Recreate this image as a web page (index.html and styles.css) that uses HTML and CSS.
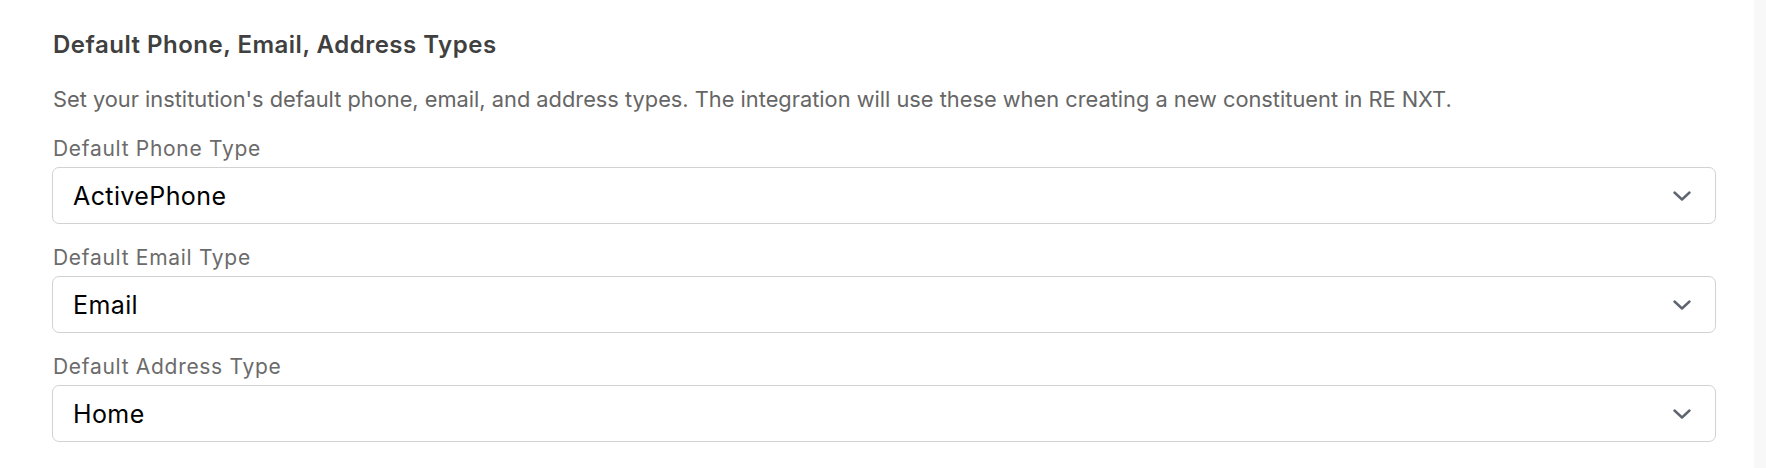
FILE: index.html
```html
<!DOCTYPE html>
<html lang="en">
<head>
<meta charset="utf-8">
<title>Default Phone, Email, Address Types</title>
<link rel="stylesheet" href="styles.css">
</head>
<body>
<div class="page">
  <section class="panel">
    <h2 class="title">Default Phone, Email, Address Types</h2>
    <p class="desc">Set your institution's default phone, email, and address types. The integration will use these when creating a new constituent in RE NXT.</p>
    <div class="field">
      <label class="label">Default Phone Type</label>
      <div class="select">
        <span class="value">ActivePhone</span>
        <svg class="chev" viewBox="0 0 18 10" width="18" height="10"><path d="M1.5 1.5 L9 8.5 L16.5 1.5" fill="none" stroke="#5f6570" stroke-width="2.4" stroke-linecap="round" stroke-linejoin="round"/></svg>
      </div>
    </div>
    <div class="field">
      <label class="label">Default Email Type</label>
      <div class="select">
        <span class="value">Email</span>
        <svg class="chev" viewBox="0 0 18 10" width="18" height="10"><path d="M1.5 1.5 L9 8.5 L16.5 1.5" fill="none" stroke="#5f6570" stroke-width="2.4" stroke-linecap="round" stroke-linejoin="round"/></svg>
      </div>
    </div>
    <div class="field">
      <label class="label">Default Address Type</label>
      <div class="select">
        <span class="value">Home</span>
        <svg class="chev" viewBox="0 0 18 10" width="18" height="10"><path d="M1.5 1.5 L9 8.5 L16.5 1.5" fill="none" stroke="#5f6570" stroke-width="2.4" stroke-linecap="round" stroke-linejoin="round"/></svg>
      </div>
    </div>
  </section>
</div>
</body>
</html>
```
FILE: styles.css
```css
html, body {
  margin: 0;
  padding: 0;
  height: 100%;
}
body {
  background: #f8f8f8;
  font-family: Inter, "Noto Sans", "Liberation Sans", sans-serif;
}
.page {
  display: flex;
  height: 100%;
}
.panel {
  width: 1754px;
  box-sizing: border-box;
  background: #ffffff;
  padding: 31px 38px 0 52px;
}
.title {
  margin: 0;
  font-size: 24px;
  line-height: 28px;
  font-weight: 600;
  letter-spacing: 0.5px;
  color: #404040;
  padding-left: 1px;
}
.desc {
  margin: 26px 0 24px;
  font-size: 21.8px;
  line-height: 28px;
  color: #666666;
  padding-left: 1px;
}
.field {
  display: flex;
  flex-direction: column;
  gap: 6px;
  margin-bottom: 22px;
}
.label {
  font-size: 21px;
  line-height: 24px;
  letter-spacing: 0.7px;
  color: #6b6b6b;
  padding-left: 1px;
}
.select {
  height: 57px;
  box-sizing: border-box;
  border: 1px solid #d2d2d2;
  border-radius: 7px;
  display: flex;
  align-items: center;
  justify-content: space-between;
  padding: 0 24px 0 20px;
}
.value {
  font-size: 25px;
  letter-spacing: 0.4px;
  color: #000000;
}
.chev {
  display: block;
}
```
